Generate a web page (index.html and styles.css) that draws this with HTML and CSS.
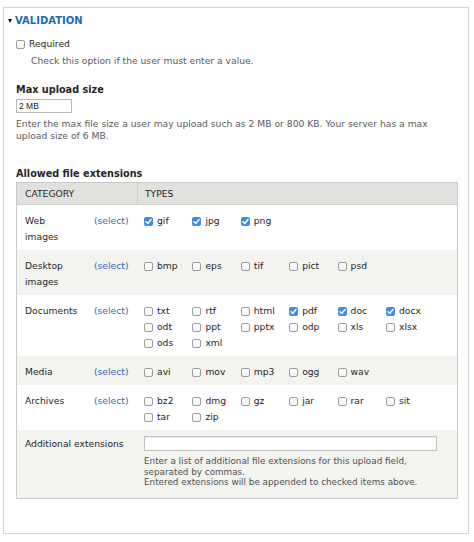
FILE: index.html
```html
<!DOCTYPE html>
<html>
<head>
<meta charset="utf-8">
<link rel="stylesheet" href="styles.css">
</head>
<body>
<div class="fs">
  <div class="legend"><span class="tri"></span>VALIDATION</div>
  <div class="req"><span class="cb"></span><span>Required</span></div>
  <div class="desc indent">Check this option if the user must enter a value.</div>
  <div class="label">Max upload size</div>
  <div class="size-input">2 MB</div>
  <div class="desc size-desc">Enter the max file size a user may upload such as 2 MB or 800 KB. Your server has a max upload size of 6 MB.</div>
  <div class="label allowed">Allowed file extensions</div>
  <div class="tbl">
    <div class="thead">
      <div class="th th-cat">CATEGORY</div>
      <div class="th th-types">TYPES</div>
    </div>

    <div class="row">
      <div class="cat"><span class="name">Web images</span><span class="sel">(select)</span></div>
      <div class="types">
        <span class="ck"><span class="cb on"><svg viewBox="0 0 9 9" width="9" height="9"><path d="M2 4.7 L3.8 6.4 L7 2.6" fill="none" stroke="#fff" stroke-width="1.5" stroke-linecap="round" stroke-linejoin="round"/></svg></span>gif</span>
        <span class="ck"><span class="cb on"><svg viewBox="0 0 9 9" width="9" height="9"><path d="M2 4.7 L3.8 6.4 L7 2.6" fill="none" stroke="#fff" stroke-width="1.5" stroke-linecap="round" stroke-linejoin="round"/></svg></span>jpg</span>
        <span class="ck"><span class="cb on"><svg viewBox="0 0 9 9" width="9" height="9"><path d="M2 4.7 L3.8 6.4 L7 2.6" fill="none" stroke="#fff" stroke-width="1.5" stroke-linecap="round" stroke-linejoin="round"/></svg></span>png</span>
      </div>
    </div>

    <div class="row alt">
      <div class="cat"><span class="name">Desktop images</span><span class="sel">(select)</span></div>
      <div class="types">
        <span class="ck"><span class="cb"></span>bmp</span>
        <span class="ck"><span class="cb"></span>eps</span>
        <span class="ck"><span class="cb"></span>tif</span>
        <span class="ck"><span class="cb"></span>pict</span>
        <span class="ck"><span class="cb"></span>psd</span>
      </div>
    </div>

    <div class="row">
      <div class="cat"><span class="name">Documents</span><span class="sel">(select)</span></div>
      <div class="types">
        <span class="ck"><span class="cb"></span>txt</span>
        <span class="ck"><span class="cb"></span>rtf</span>
        <span class="ck"><span class="cb"></span>html</span>
        <span class="ck"><span class="cb on"><svg viewBox="0 0 9 9" width="9" height="9"><path d="M2 4.7 L3.8 6.4 L7 2.6" fill="none" stroke="#fff" stroke-width="1.5" stroke-linecap="round" stroke-linejoin="round"/></svg></span>pdf</span>
        <span class="ck"><span class="cb on"><svg viewBox="0 0 9 9" width="9" height="9"><path d="M2 4.7 L3.8 6.4 L7 2.6" fill="none" stroke="#fff" stroke-width="1.5" stroke-linecap="round" stroke-linejoin="round"/></svg></span>doc</span>
        <span class="ck"><span class="cb on"><svg viewBox="0 0 9 9" width="9" height="9"><path d="M2 4.7 L3.8 6.4 L7 2.6" fill="none" stroke="#fff" stroke-width="1.5" stroke-linecap="round" stroke-linejoin="round"/></svg></span>docx</span>
        <span class="ck"><span class="cb"></span>odt</span>
        <span class="ck"><span class="cb"></span>ppt</span>
        <span class="ck"><span class="cb"></span>pptx</span>
        <span class="ck"><span class="cb"></span>odp</span>
        <span class="ck"><span class="cb"></span>xls</span>
        <span class="ck"><span class="cb"></span>xlsx</span>
        <span class="ck"><span class="cb"></span>ods</span>
        <span class="ck"><span class="cb"></span>xml</span>
      </div>
    </div>

    <div class="row alt">
      <div class="cat"><span class="name">Media</span><span class="sel">(select)</span></div>
      <div class="types">
        <span class="ck"><span class="cb"></span>avi</span>
        <span class="ck"><span class="cb"></span>mov</span>
        <span class="ck"><span class="cb"></span>mp3</span>
        <span class="ck"><span class="cb"></span>ogg</span>
        <span class="ck"><span class="cb"></span>wav</span>
      </div>
    </div>

    <div class="row">
      <div class="cat"><span class="name">Archives</span><span class="sel">(select)</span></div>
      <div class="types">
        <span class="ck"><span class="cb"></span>bz2</span>
        <span class="ck"><span class="cb"></span>dmg</span>
        <span class="ck"><span class="cb"></span>gz</span>
        <span class="ck"><span class="cb"></span>jar</span>
        <span class="ck"><span class="cb"></span>rar</span>
        <span class="ck"><span class="cb"></span>sit</span>
        <span class="ck"><span class="cb"></span>tar</span>
        <span class="ck"><span class="cb"></span>zip</span>
      </div>
    </div>

    <div class="row alt addl">
      <div class="cat addl-cat">Additional extensions</div>
      <div class="addl-body">
        <div class="addl-input"></div>
        <div class="addl-desc">Enter a list of additional file extensions for this upload field, separated by commas.<br>Entered extensions will be appended to checked items above.</div>
      </div>
    </div>
  </div>
</div>
</body>
</html>
```

FILE: styles.css
```css
* { box-sizing: border-box; }
html, body { margin: 0; background: #fff; }
body {
  font-family: "DejaVu Sans", Verdana, sans-serif;
  font-size: 9.2px;
  color: #262626;
}
.fs {
  margin: 7px 0 0 3px;
  width: 466px;
  height: 527px;
  border: 1px solid #d4d4d4;
  padding: 0 10px 0 12px;
}
.legend {
  margin: 7px 0 0 -8px;
  line-height: 12px;
  font-weight: bold;
  font-size: 10px;
  color: #1b6db3;
  display: flex;
  align-items: center;
}
.tri {
  width: 0;
  height: 0;
  border-left: 2.5px solid transparent;
  border-right: 2.5px solid transparent;
  border-top: 4px solid #111;
  margin-right: 3px;
}
.req {
  margin-top: 9px;
  line-height: 16px;
  display: flex;
  align-items: center;
}
.cb {
  flex: none;
  width: 9px;
  height: 9px;
  margin-right: 4px;
  border: 1px solid #9d9d9d;
  border-radius: 2px;
  background: linear-gradient(#fff, #f2f2f2);
  display: inline-block;
}
.cb.on {
  border: none;
  background: #3d8ee9;
}
.cb svg { display: block; }
.desc {
  color: #5a5a5a;
  line-height: 12px;
}
.indent {
  margin-top: 3px;
  padding-left: 15px;
}
.label {
  margin-top: 17px;
  line-height: 12px;
  font-weight: bold;
  font-size: 9.7px;
  color: #262626;
}
.size-input {
  margin-top: 3px;
  width: 56px;
  height: 14px;
  border: 1px solid #b9b9b9;
  font-family: "Liberation Sans", Arial, sans-serif;
  font-size: 8.5px;
  line-height: 12px;
  padding-left: 2px;
  color: #222;
}
.size-desc {
  margin-top: 5px;
  line-height: 11.6px;
}
.allowed { margin-top: 27px; }
.tbl {
  margin-top: 2px;
  width: 442px;
  border: 1px solid #cbcbcb;
}
.thead {
  display: grid;
  grid-template-columns: 121px 1fr;
  background: #e2e1dd;
  height: 22px;
  border-bottom: 1px solid #d2d1cd;
  line-height: 21px;
}
.th-cat {
  padding-left: 8px;
  border-right: 1px solid #cfceca;
}
.th-types { padding-left: 7px; }
.row {
  display: grid;
  grid-template-columns: 121px 1fr;
  padding: 8px 0 5px;
  line-height: 16px;
}
.row.alt { background: #f3f3ef; }
.cat {
  display: flex;
  align-items: flex-start;
  padding-left: 8px;
}
.name { width: 55px; }
.sel {
  margin-left: 14px;
  color: #2f6cb5;
}
.types {
  display: grid;
  grid-template-columns: repeat(6, 48.4px);
  padding-left: 6px;
}
.ck {
  display: flex;
  align-items: center;
  height: 16px;
}
.addl { padding: 6px 0 10px; }
.addl-cat { line-height: 15px; }
.addl-body { padding-left: 6px; }
.addl-input {
  width: 293px;
  height: 15px;
  border: 1px solid #c3c3c3;
  background: #fff;
  box-shadow: inset 0 1px 1px rgba(0,0,0,0.08);
}
.addl-desc {
  margin-top: 5px;
  width: 293px;
  font-size: 8.8px;
  line-height: 10.5px;
  color: #505050;
}
```
